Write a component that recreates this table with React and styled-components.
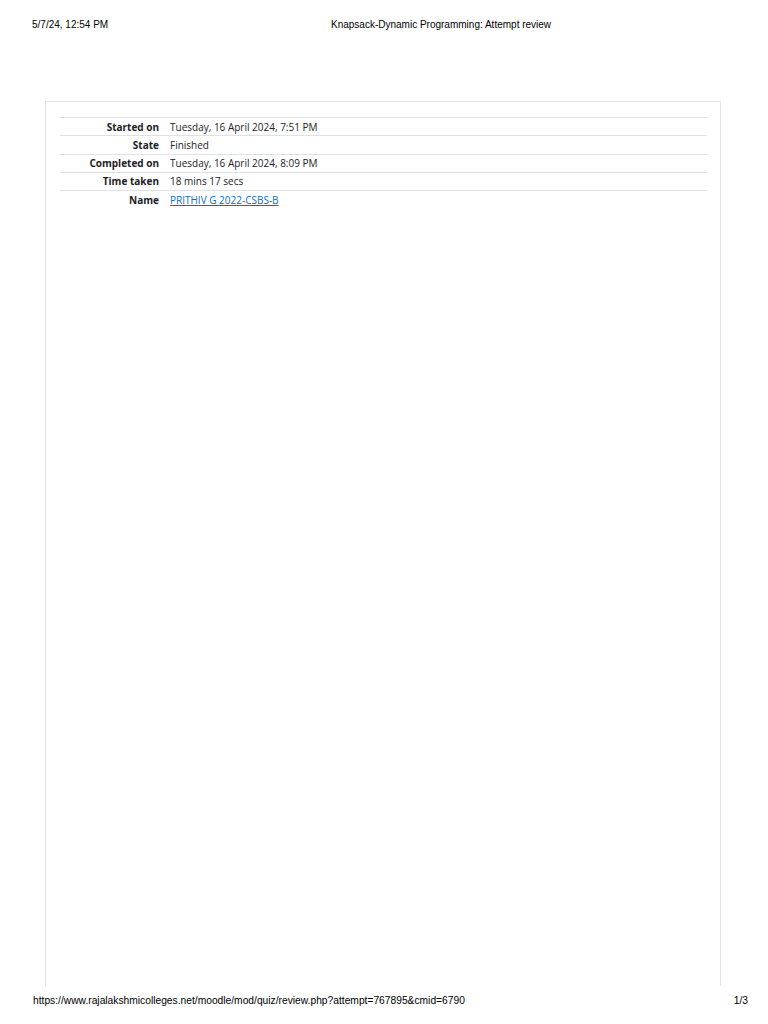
import React from "react";
import styled, { createGlobalStyle } from "styled-components";

const Global = createGlobalStyle`
  html, body { margin: 0; padding: 0; background: #fff; }
  * { box-sizing: border-box; }
`;

const Page = styled.div`
  width: 768px;
  height: 1024px;
  display: flex;
  flex-direction: column;
  font-family: "Liberation Sans", Arial, sans-serif;
  color: #000;
  overflow: hidden;
`;

const PrintHeader = styled.header`
  height: 101px;
  padding: 19px 0 0 32px;
  display: grid;
  grid-template-columns: 299px auto;
  align-items: start;
  font-size: 10px;
  line-height: 12px;
`;

const Card = styled.section`
  margin: 0 47px 0 45px;
  height: 885px;
  border: 1px solid #e3e3e3;
  border-bottom: none;
  padding: 15px 13px 0 14px;
`;

const Summary = styled.table`
  width: 100%;
  border-collapse: collapse;
  font-family: "Open Sans", "Noto Sans", sans-serif;
  font-size: 10px;
  color: #1d2125;
`;

const Row = styled.tr`
  border-top: 1px solid #dee2e6;
`;

const Label = styled.th`
  width: 99px;
  text-align: right;
  font-weight: 700;
  padding: 0;
  height: 18.25px;
  line-height: 12px;
  white-space: nowrap;
`;

const Value = styled.td`
  padding: 0 0 0 11px;
  font-weight: 400;
  line-height: 12px;
`;

const Link = styled.a`
  color: #0f6cbf;
  text-decoration: underline;
`;

const PrintFooter = styled.footer`
  flex: 1;
  display: flex;
  justify-content: space-between;
  align-items: center;
  padding: 0 20px 10px 33px;
  font-size: 10.25px;
`;

const rows = [
  ["Started on", "Tuesday, 16 April 2024, 7:51 PM"],
  ["State", "Finished"],
  ["Completed on", "Tuesday, 16 April 2024, 8:09 PM"],
  ["Time taken", "18 mins 17 secs"],
];

export default function App() {
  return (
    <>
      <Global />
      <Page>
        <PrintHeader>
          <span>5/7/24, 12:54 PM</span>
          <span>Knapsack-Dynamic Programming: Attempt review</span>
        </PrintHeader>
        <Card>
          <Summary>
            <tbody>
              {rows.map(([k, v]) => (
                <Row key={k}>
                  <Label>{k}</Label>
                  <Value>{v}</Value>
                </Row>
              ))}
              <Row>
                <Label>Name</Label>
                <Value>
                  <Link href="#">PRITHIV G 2022-CSBS-B</Link>
                </Value>
              </Row>
            </tbody>
          </Summary>
        </Card>
        <PrintFooter>
          <span>https://www.rajalakshmicolleges.net/moodle/mod/quiz/review.php?attempt=767895&amp;cmid=6790</span>
          <span>1/3</span>
        </PrintFooter>
      </Page>
    </>
  );
}
